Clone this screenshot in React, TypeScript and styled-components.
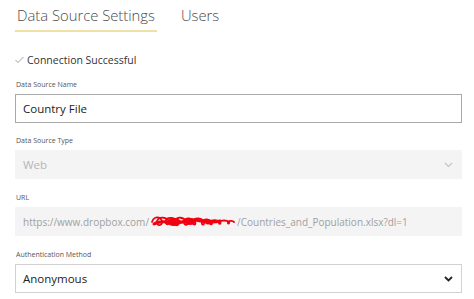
import styled, { createGlobalStyle } from "styled-components";

const GlobalStyle = createGlobalStyle`
  html, body {
    margin: 0;
    padding: 0;
    background: #ffffff;
    font-family: "Open Sans", "Noto Sans", sans-serif;
  }
`;

// styles

const Page = styled.div`
  width: 474px;
  height: 299px;
  padding: 0 12px 0 15px;
  box-sizing: border-box;
  display: flex;
  flex-direction: column;
  overflow: hidden;
`;

const Tabs = styled.div`
  display: flex;
  gap: 22px;
  padding-top: 5px;
`;

const Tab = styled.div<{ $active?: boolean }>`
  font-size: 14.8px;
  font-weight: 300;
  color: #4a4a4a;
  padding: 0 2px 5px 2px;
  border-bottom: 2px solid ${(p) => (p.$active ? "#efe0a6" : "transparent")};
`;

const Status = styled.div`
  display: flex;
  align-items: center;
  gap: 3px;
  margin-top: 21px;
  font-size: 10.5px;
  color: #333;
`;

const Label = styled.div<{ $top: number }>`
  font-size: 7px;
  color: #555;
  margin-top: ${(p) => p.$top}px;
  margin-bottom: 5px;
  padding-left: 1px;
`;

const Field = styled.div<{ $variant: "input" | "disabled" | "select" }>`
  height: 29px;
  box-sizing: border-box;
  display: flex;
  align-items: center;
  justify-content: space-between;
  padding: 0 8px 0 7px;
  font-size: 11.5px;
  background: ${(p) => (p.$variant === "disabled" ? "#f4f4f4" : "#fff")};
  color: ${(p) => (p.$variant === "disabled" ? "#b4b4b4" : "#222")};
  border: 1px solid
    ${(p) =>
      p.$variant === "input"
        ? "#a9a9a9"
        : p.$variant === "select"
        ? "#d2d2d2"
        : "#f4f4f4"};
  white-space: nowrap;
`;

const UrlText = styled.span`
  display: flex;
  align-items: center;
  font-size: 10px;
  color: #a0a0a0;
`;

const Chevron = ({ dark }: { dark?: boolean }) => (
  <svg width="9" height="6" viewBox="0 0 9 6">
    <path
      d="M1 1 L4.5 4.5 L8 1"
      fill="none"
      stroke={dark ? "#222" : "#c4c4c4"}
      strokeWidth={dark ? 1.8 : 1.2}
    />
  </svg>
);

const Check = () => (
  <svg width="9" height="8" viewBox="0 0 9 8">
    <path d="M0.5 4 L3 6.5 L8.5 1" fill="none" stroke="#888" strokeWidth="0.8" />
  </svg>
);

const Scribble = () => (
  <svg width="86" height="14" viewBox="0 0 86 14" style={{ margin: "0 1px" }}>
    <path
      d="M2 7 C4 1 10 1 12 6 C13 11 6 12 7 6 C9 1 16 2 19 6 C21 10 14 11 16 5 C18 1 26 3 28 7 C30 11 24 12 25 6 C27 1 34 2 37 7 C39 11 33 11 34 6 C36 2 42 3 45 7 C47 10 42 11 43 6 C45 2 52 3 54 7 C55 10 51 11 52 7 C54 3 60 4 62 7 C63 10 59 10 60 7 C62 4 68 5 70 7 C72 9 68 10 69 7 C71 5 77 5 79 7 C80 9 77 9 78 7 C80 5 83 6 84 7"
      fill="none"
      stroke="#f00010"
      strokeWidth="1.8"
      strokeLinecap="round"
    />
    <path
      d="M4 9 C14 3 24 11 36 6 C46 2 56 10 70 6"
      fill="none"
      stroke="#f00010"
      strokeWidth="3"
      strokeLinecap="round"
    />
    <ellipse cx="24" cy="7" rx="7" ry="4" fill="#f00010" />
    <ellipse cx="40" cy="6.5" rx="6" ry="3.5" fill="#f00010" />
    <ellipse cx="58" cy="7" rx="3" ry="2.5" fill="#f00010" />
  </svg>
);

const App = () => {
  return (
    <>
      <GlobalStyle />
      <Page>
        <Tabs>
          <Tab $active>Data Source Settings</Tab>
          <Tab>Users</Tab>
        </Tabs>
        <Status>
          <Check />
          Connection Successful
        </Status>
        <Label $top={13}>Data Source Name</Label>
        <Field $variant="input">Country File</Field>
        <Label $top={13}>Data Source Type</Label>
        <Field $variant="disabled">
          Web
          <Chevron />
        </Field>
        <Label $top={14}>URL</Label>
        <Field $variant="disabled">
          <UrlText>
            https://www.dropbox.com/
            <Scribble />
            /Countries_and_Population.xlsx?dl=1
          </UrlText>
        </Field>
        <Label $top={14}>Authentication Method</Label>
        <Field $variant="select">
          Anonymous
          <Chevron dark />
        </Field>
      </Page>
    </>
  );
};

export default App;
